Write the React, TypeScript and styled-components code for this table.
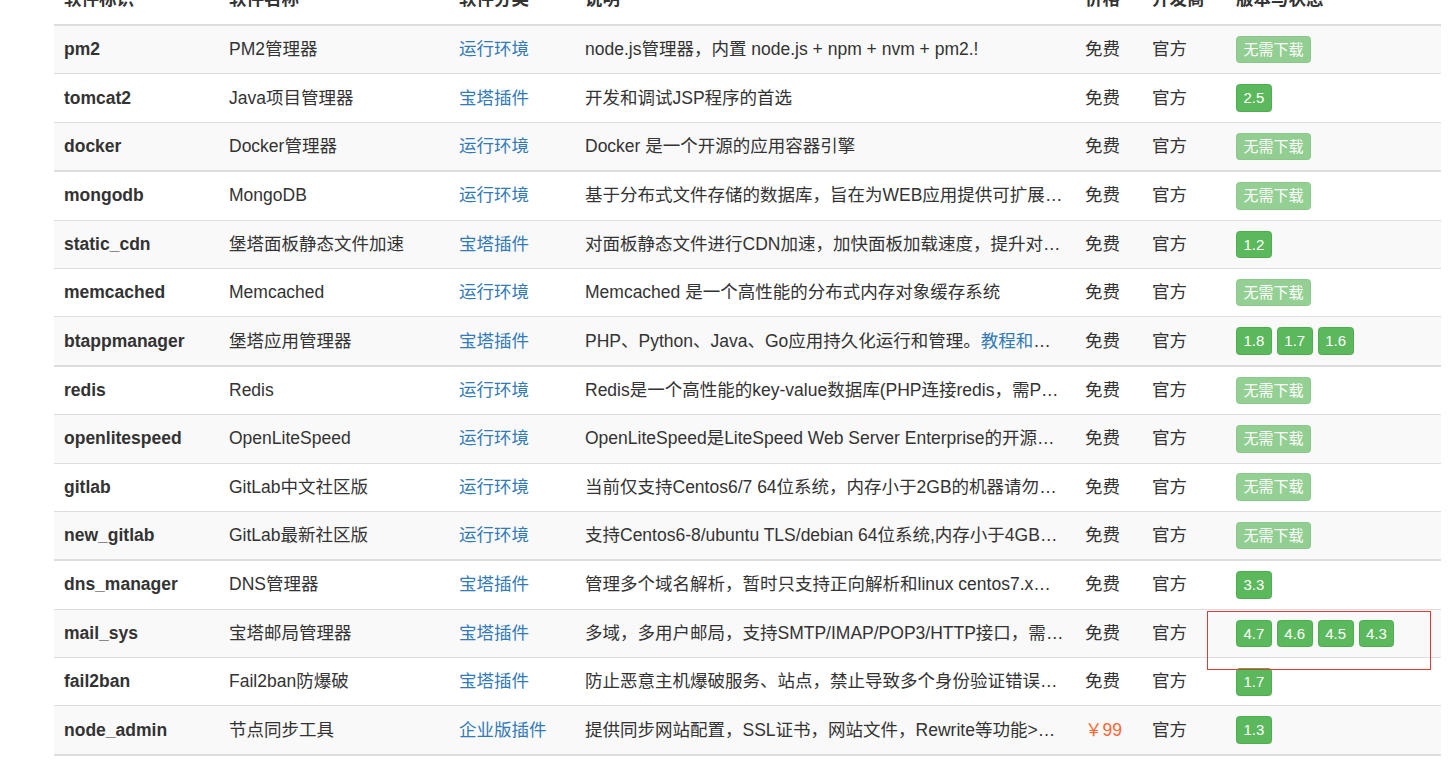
import React from "react";
import styled, { createGlobalStyle } from "styled-components";

const Global = createGlobalStyle`
  html, body { margin: 0; padding: 0; background: #fff; overflow: hidden; }
  body { font-family: "Liberation Sans", "Noto Sans CJK SC", sans-serif; color: #333; }
`;

const Page = styled.div`
  padding: 0 13px 0 54px;
  margin-top: -23px;
`;

const Wrap = styled.div`
  position: relative;
  width: 1387px;
`;

const Table = styled.table`
  width: 100%;
  border-collapse: collapse;
  border-spacing: 0;
  table-layout: fixed;
  font-size: 17.5px;
  border-bottom: 2px solid #ddd;
`;

const Th = styled.th`
  text-align: left;
  font-weight: bold;
  vertical-align: bottom;
  padding: 10px 10px 12px;
  line-height: 25px;
  border-bottom: 2px solid #ddd;
  white-space: nowrap;
`;

const Body = styled.tbody<{ $first?: boolean }>`
  border-top: ${(p) => (p.$first ? "0" : "2px solid #ddd")};
`;

const Row = styled.tr<{ $striped: boolean }>`
  background: ${(p) => (p.$striped ? "#f9f9f9" : "#fff")};
  & + & { border-top: 1px solid #ddd; }
`;

const Td = styled.td<{ $bold?: boolean }>`
  height: 47.4px;
  padding: 0 10px;
  vertical-align: middle;
  line-height: 25px;
  font-weight: ${(p) => (p.$bold ? "bold" : "normal")};
  white-space: nowrap;
  overflow: hidden;
  text-overflow: ellipsis;
`;

const Link = styled.a`
  color: #337ab7;
  text-decoration: none;
`;

const Price = styled.span<{ $paid?: boolean }>`
  color: ${(p) => (p.$paid ? "#ff6633" : "#333")};
`;

const Badges = styled.div`
  display: flex;
  gap: 5px;
  align-items: center;
`;

const Badge = styled.span<{ $disabled?: boolean }>`
  display: inline-block;
  box-sizing: border-box;
  height: 27.5px;
  line-height: 25.5px;
  padding: 0 6.5px;
  font-size: 15px;
  color: #fff;
  background: #5cb85c;
  border: 1px solid #4cae4c;
  border-radius: 3.5px;
  opacity: ${(p) => (p.$disabled ? 0.65 : 1)};
`;

const Mark = styled.div`
  position: absolute;
  left: 1153px;
  top: 634px;
  width: 222px;
  height: 57px;
  border: 1px solid #e53935;
  pointer-events: none;
`;

type Item = {
  id: string;
  name: string;
  cat: string;
  desc: React.ReactNode;
  price?: string;
  versions?: string[];
};

const RUN = "运行环境";
const BT = "宝塔插件";

const groups: Item[][] = [
  [
    { id: "pm2", name: "PM2管理器", cat: RUN, desc: "node.js管理器，内置 node.js + npm + nvm + pm2.!" },
    { id: "tomcat2", name: "Java项目管理器", cat: BT, desc: "开发和调试JSP程序的首选", versions: ["2.5"] },
    { id: "docker", name: "Docker管理器", cat: RUN, desc: "Docker 是一个开源的应用容器引擎" },
  ],
  [
    { id: "mongodb", name: "MongoDB", cat: RUN, desc: "基于分布式文件存储的数据库，旨在为WEB应用提供可扩展的高性能数据存储解决方案" },
    { id: "static_cdn", name: "堡塔面板静态文件加速", cat: BT, desc: "对面板静态文件进行CDN加速，加快面板加载速度，提升对面板的访问体验", versions: ["1.2"] },
    { id: "memcached", name: "Memcached", cat: RUN, desc: "Memcached 是一个高性能的分布式内存对象缓存系统" },
    {
      id: "btappmanager",
      name: "堡塔应用管理器",
      cat: BT,
      desc: (
        <>
          PHP、Python、Java、Go应用持久化运行和管理。<Link href="#">教程和使用说明</Link>
        </>
      ),
      versions: ["1.8", "1.7", "1.6"],
    },
  ],
  [
    { id: "redis", name: "Redis", cat: RUN, desc: "Redis是一个高性能的key-value数据库(PHP连接redis，需PHP安装redis扩展)" },
    { id: "openlitespeed", name: "OpenLiteSpeed", cat: RUN, desc: "OpenLiteSpeed是LiteSpeed Web Server Enterprise的开源版本" },
    { id: "gitlab", name: "GitLab中文社区版", cat: RUN, desc: "当前仅支持Centos6/7 64位系统，内存小于2GB的机器请勿安装" },
    { id: "new_gitlab", name: "GitLab最新社区版", cat: RUN, desc: "支持Centos6-8/ubuntu TLS/debian 64位系统,内存小于4GB的机器请勿安装" },
  ],
  [
    { id: "dns_manager", name: "DNS管理器", cat: BT, desc: "管理多个域名解析，暂时只支持正向解析和linux centos7.x系统", versions: ["3.3"] },
    { id: "mail_sys", name: "宝塔邮局管理器", cat: BT, desc: "多域，多用户邮局，支持SMTP/IMAP/POP3/HTTP接口，需要占用25端口", versions: ["4.7", "4.6", "4.5", "4.3"] },
    { id: "fail2ban", name: "Fail2ban防爆破", cat: BT, desc: "防止恶意主机爆破服务、站点，禁止导致多个身份验证错误的主机", versions: ["1.7"] },
    { id: "node_admin", name: "节点同步工具", cat: "企业版插件", desc: "提供同步网站配置，SSL证书，网站文件，Rewrite等功能>>使用帮助", price: "￥99", versions: ["1.3"] },
  ],
];

const widths = [165, 230, 126, 500, 67, 84, 215];
const heads = ["软件标识", "软件名称", "软件分类", "说明", "价格", "开发商", "版本与状态"];

export default function App() {
  let idx = 0;
  return (
    <Page>
      <Global />
      <Wrap>
        <Table>
          <colgroup>
            {widths.map((w, i) => (
              <col key={i} style={{ width: w }} />
            ))}
          </colgroup>
          <thead>
            <tr>
              {heads.map((h) => (
                <Th key={h}>{h}</Th>
              ))}
            </tr>
          </thead>
          {groups.map((g, gi) => (
            <Body key={gi} $first={gi === 0}>
              {g.map((it) => {
                idx += 1;
                return (
                  <Row key={it.id} $striped={idx % 2 === 1}>
                    <Td $bold>{it.id}</Td>
                    <Td>{it.name}</Td>
                    <Td>
                      <Link href="#">{it.cat}</Link>
                    </Td>
                    <Td>{it.desc}</Td>
                    <Td>
                      <Price $paid={!!it.price}>{it.price ?? "免费"}</Price>
                    </Td>
                    <Td>官方</Td>
                    <Td>
                      <Badges>
                        {it.versions ? (
                          it.versions.map((v) => <Badge key={v}>{v}</Badge>)
                        ) : (
                          <Badge $disabled>无需下载</Badge>
                        )}
                      </Badges>
                    </Td>
                  </Row>
                );
              })}
            </Body>
          ))}
        </Table>
        <Mark />
      </Wrap>
    </Page>
  );
}
